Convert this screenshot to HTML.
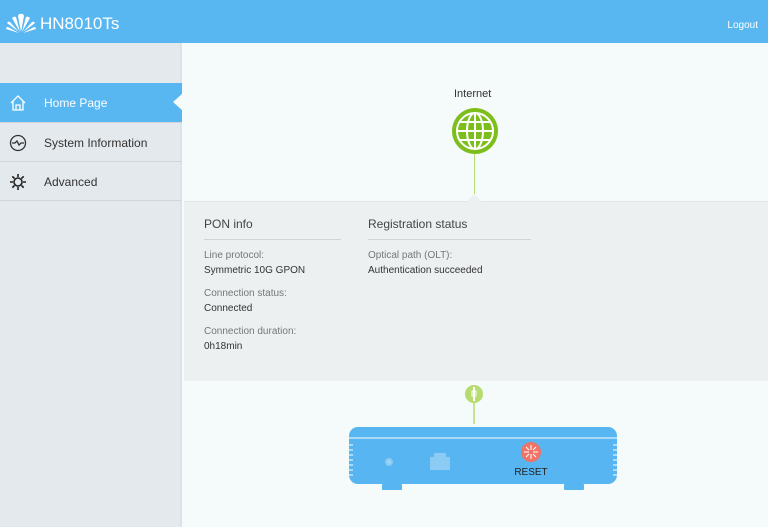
<!DOCTYPE html>
<html><head><meta charset="utf-8"><style>
*{margin:0;padding:0;box-sizing:border-box}
body{width:768px;height:527px;overflow:hidden;font-family:"Liberation Sans",sans-serif;background:#f5fafb;position:relative}
.hdr{position:absolute;left:0;top:0;width:768px;height:43px;background:#58b6f1;color:#fff}
.hdr .t{position:absolute;left:40px;top:14px;font-size:17px}
.hdr .lo{position:absolute;right:10px;top:20px;font-size:10px}
.side{position:absolute;left:0;top:43px;width:182px;height:484px;background:#e4e9ed;border-right:2px solid #dde2e6}
.item{position:absolute;left:0;width:182px;height:39px;border-top:1px solid #cfd5d9;font-size:12px;color:#333}
.item span{position:absolute;left:44px;top:13px}
.item svg{position:absolute;left:9px;top:11px}
.act{background:#58b6f1;color:#fff}
.panel{position:absolute;left:184px;top:201px;width:584px;height:180px;background:#ecf0f1;border-top:1px solid #e2e6e8}
.lbl{position:absolute;font-size:10px;color:#777}
.val{position:absolute;font-size:10px;color:#333}
.h{position:absolute;font-size:12px;color:#444}
.hr{position:absolute;height:1px;background:#cfd4d7}
</style></head><body>
<div class="hdr">
<svg style="position:absolute;left:6px;top:12px" width="30" height="22" viewBox="0 0 30 22"><g fill="#fff"><path d="M15 20 L12 4 Q13 1 15 2 Z"/><path d="M15 20 L18 4 Q17 1 15 2 Z"/><path d="M14 20 L6 6 Q8 4 10 5 Z"/><path d="M16 20 L24 6 Q22 4 20 5 Z"/><path d="M13 20 L1 11 Q2 9 4 10 Z"/><path d="M17 20 L29 11 Q28 9 26 10 Z"/><path d="M13 21 L0 17 Q0 15 2 15 Z"/><path d="M17 21 L30 17 Q30 15 28 15 Z"/></g></svg>
<div class="t">HN8010Ts</div><div class="lo">Logout</div></div>
<div class="side">
<div class="item act" style="top:40px;border-top:none">
<svg width="18" height="18" viewBox="0 0 18 18" fill="none" stroke="#fff" stroke-width="1.3"><path d="M2 9 L9 2 L16 9 M4 7 V16 H14 V7 M7 16 V11 H11 V16"/></svg><span>Home Page</span></div>
<div class="item" style="top:79px"><svg width="18" height="18" viewBox="0 0 18 18" fill="none" stroke="#333" stroke-width="1.3"><circle cx="9" cy="9" r="7.5"/><path d="M3 9 H6 L8 7 L10 11 L12 9 H15"/></svg><span>System Information</span></div>
<div class="item" style="top:118px"><svg width="18" height="18" viewBox="0 0 18 18" fill="none" stroke="#222" stroke-width="1.6"><circle cx="9" cy="9" r="4"/><path d="M9 1V4M9 14V17M1 9H4M14 9H17M3.3 3.3L5.5 5.5M12.5 12.5L14.7 14.7M3.3 14.7L5.5 12.5M12.5 5.5L14.7 3.3"/></svg><span>Advanced</span></div>
<div class="item" style="top:157px;height:1px"></div>
</div>
<div style="position:absolute;left:173px;top:93px;width:0;height:0;border-top:9px solid transparent;border-bottom:9px solid transparent;border-right:10px solid #f5fafb"></div>
<div style="position:absolute;left:454px;top:88px;font-size:11px;color:#333">Internet</div>
<svg style="position:absolute;left:451px;top:107px" width="48" height="48" viewBox="0 0 48 48"><circle cx="24" cy="24" r="23" fill="#7dbe1c"/><g fill="none" stroke="#fff" stroke-width="2"><circle cx="24" cy="24" r="18"/><ellipse cx="24" cy="24" rx="8" ry="18"/><path d="M24 6V42M6 24H42M9 15H39M9 33H39"/></g></svg>
<div style="position:absolute;left:474px;top:154px;width:1px;height:40px;background:#b7dc7a"></div>
<div class="panel">
<div style="position:absolute;left:282px;top:-8px;width:0;height:0;border-left:8px solid transparent;border-right:8px solid transparent;border-bottom:8px solid #ecf0f1"></div>
<div class="h" style="left:20px;top:15px">PON info</div><div class="hr" style="left:20px;top:37px;width:137px"></div>
<div class="h" style="left:184px;top:15px">Registration status</div><div class="hr" style="left:184px;top:37px;width:163px"></div>
<div class="lbl" style="left:20px;top:48px">Line protocol:</div><div class="val" style="left:20px;top:63px">Symmetric 10G GPON</div>
<div class="lbl" style="left:20px;top:86px">Connection status:</div><div class="val" style="left:20px;top:101px">Connected</div>
<div class="lbl" style="left:20px;top:124px">Connection duration:</div><div class="val" style="left:20px;top:139px">0h18min</div>
<div class="lbl" style="left:184px;top:48px">Optical path (OLT):</div><div class="val" style="left:184px;top:63px">Authentication succeeded</div>
</div>
<svg style="position:absolute;left:340px;top:383px" width="290" height="115" viewBox="0 0 290 115">
<circle cx="134" cy="11" r="9" fill="#b6dc6e"/><path d="M134 4V18" stroke="#fff" stroke-width="2"/><rect x="132" y="8" width="4" height="5" fill="none" stroke="#fff"/>
<path d="M134 20V41" stroke="#b6dc6e" stroke-width="1.5"/>
<rect x="9" y="44" width="268" height="57" rx="9" fill="#57b5f1"/>
<path d="M9 55H277" stroke="#fff" stroke-width="1"/>
<g stroke="#fff" stroke-width="1"><path d="M9 62h4M9 67h4M9 72h4M9 77h4M9 82h4M9 87h4M9 92h4M273 62h4M273 67h4M273 72h4M273 77h4M273 82h4M273 87h4M273 92h4"/></g>
<rect x="42" y="101" width="20" height="6" rx="1" fill="#57b5f1"/><rect x="224" y="101" width="20" height="6" rx="1" fill="#57b5f1"/>
<circle cx="49" cy="79" r="4" fill="#8ccbf3"/><circle cx="49" cy="79" r="1.5" fill="#a8d8f6"/>
<path d="M90 87V74H94V70H106V74H110V87Z" fill="#8ccbf3"/>
<circle cx="191" cy="69" r="10" fill="#ef7468"/><g stroke="#fff" stroke-width="1"><path d="M191 62V67M191 71V76M184 69H189M193 69H198M186 64L189 67M193 71L196 74M186 74L189 71M193 67L196 64"/></g>
<text x="191" y="92" font-size="10" text-anchor="middle" fill="#222" font-family="Liberation Sans">RESET</text>
</svg>
</body></html>
